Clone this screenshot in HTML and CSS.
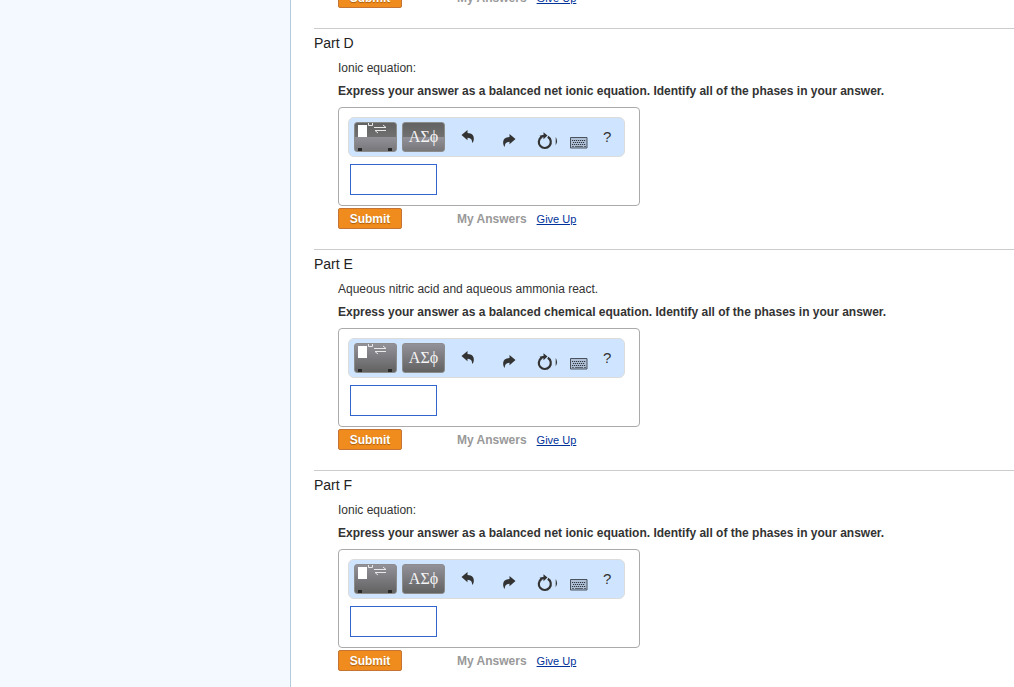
FILE: index.html
```
<!DOCTYPE html>
<html lang="en">
<head>
<meta charset="utf-8">
<title>Assignment</title>
<link rel="stylesheet" href="styles.css">
</head>
<body>
<svg class="sprites" aria-hidden="true">
  <symbol id="undo" viewBox="0 0 14 14"><path d="M.5 5 6.500 0V3C11 3.200 13.200 5.500 12.800 9.500 12.600 11 12.200 12 11.200 13 11.200 10 10.200 8 6.500 7.800V10.200Z"/></symbol>
  <symbol id="redo" viewBox="0 0 14 14"><path d="M13.500 5 7.500 0V3C3 3.200.8 5.500 1.200 9.500 1.400 11 1.800 12 2.800 13 2.800 10 3.800 8 7.500 7.800V10.200Z"/></symbol>
  <symbol id="reset" viewBox="0 0 22 18"><path d="M5.500 5A6 6 0 1 0 11.800 4.800" fill="none" stroke="currentColor" stroke-width="2.200"/><path d="M7.500 .3 11.500 3.600 7.500 7.200ZM3.500 3.800 8.500 2.600V4.800L5.500 6Z"/><path d="M19.700 5Q22.300 9.200 19.700 13.300Z"/></symbol>
  <symbol id="keyboard" viewBox="0 0 18 12"><path d="M.5.5h16.500v10.500H.5Z" fill="#aebfd6" stroke="#4a525e"/><path d="M2 3.500h14M3 5.500h12M2 7.500h14" fill="none" stroke="#303640" stroke-dasharray="1.200 .8"/><path d="M2 9.500h2M5 9.500h8M14 9.500h2" stroke="#5c6673"/></symbol>
  <symbol id="template" viewBox="0 0 41 28"><path d="M3 2h9v12H3Z" fill="#fff"/><path d="M13.500 0v2.500h4V0M19 4.500h12L28 2M20 7.500h11M20 7.500l3 2.500" fill="none" stroke="#e8e8e8"/><path d="M3 25h4v3H3ZM33 25h4v3h-4Z" fill="#292929"/></symbol>
</svg>
<div class="page">
  <aside class="sidebar"></aside>
  <main class="content">
    <div class="previous">
      <div class="actions">
        <button class="submit" type="button">Submit</button>
        <span class="my-answers">My Answers</span>
        <a class="give-up" href="#">Give Up</a>
      </div>
    </div>

    <section class="part">
      <h2 class="part-title">Part D</h2>
      <div class="part-body">
        <p class="prompt">Ionic equation:</p>
        <label class="instruction" for="answer-d">Express your answer as a balanced net ionic equation. Identify all of the phases in your answer.</label>
        <div class="editor">
          <div class="toolbar split">
            <button class="key" type="button" aria-label="Templates"><svg class="template"><use href="#template"/></svg></button>
            <button class="key" type="button">ΑΣϕ</button>
            <button class="tool undo" type="button" aria-label="Undo"><svg><use href="#undo"/></svg></button>
            <button class="tool redo" type="button" aria-label="Redo"><svg><use href="#redo"/></svg></button>
            <button class="tool reset" type="button" aria-label="Reset"><svg><use href="#reset"/></svg></button>
            <button class="tool keyboard" type="button" aria-label="Keyboard shortcuts"><svg><use href="#keyboard"/></svg></button>
            <button class="tool help" type="button">?</button>
          </div>
          <input class="answer" id="answer-d" type="text">
        </div>
        <div class="actions">
          <button class="submit" type="button">Submit</button>
          <span class="my-answers">My Answers</span>
          <a class="give-up" href="#">Give Up</a>
        </div>
      </div>
    </section>

    <section class="part">
      <h2 class="part-title">Part E</h2>
      <div class="part-body">
        <p class="prompt">Aqueous nitric acid and aqueous ammonia react.</p>
        <label class="instruction" for="answer-e">Express your answer as a balanced chemical equation. Identify all of the phases in your answer.</label>
        <div class="editor">
          <div class="toolbar">
            <button class="key" type="button" aria-label="Templates"><svg class="template"><use href="#template"/></svg></button>
            <button class="key" type="button">ΑΣϕ</button>
            <button class="tool undo" type="button" aria-label="Undo"><svg><use href="#undo"/></svg></button>
            <button class="tool redo" type="button" aria-label="Redo"><svg><use href="#redo"/></svg></button>
            <button class="tool reset" type="button" aria-label="Reset"><svg><use href="#reset"/></svg></button>
            <button class="tool keyboard" type="button" aria-label="Keyboard shortcuts"><svg><use href="#keyboard"/></svg></button>
            <button class="tool help" type="button">?</button>
          </div>
          <input class="answer" id="answer-e" type="text">
        </div>
        <div class="actions">
          <button class="submit" type="button">Submit</button>
          <span class="my-answers">My Answers</span>
          <a class="give-up" href="#">Give Up</a>
        </div>
      </div>
    </section>

    <section class="part">
      <h2 class="part-title">Part F</h2>
      <div class="part-body">
        <p class="prompt">Ionic equation:</p>
        <label class="instruction" for="answer-f">Express your answer as a balanced net ionic equation. Identify all of the phases in your answer.</label>
        <div class="editor">
          <div class="toolbar">
            <button class="key" type="button" aria-label="Templates"><svg class="template"><use href="#template"/></svg></button>
            <button class="key" type="button">ΑΣϕ</button>
            <button class="tool undo" type="button" aria-label="Undo"><svg><use href="#undo"/></svg></button>
            <button class="tool redo" type="button" aria-label="Redo"><svg><use href="#redo"/></svg></button>
            <button class="tool reset" type="button" aria-label="Reset"><svg><use href="#reset"/></svg></button>
            <button class="tool keyboard" type="button" aria-label="Keyboard shortcuts"><svg><use href="#keyboard"/></svg></button>
            <button class="tool help" type="button">?</button>
          </div>
          <input class="answer" id="answer-f" type="text">
        </div>
        <div class="actions">
          <button class="submit" type="button">Submit</button>
          <span class="my-answers">My Answers</span>
          <a class="give-up" href="#">Give Up</a>
        </div>
      </div>
    </section>
  </main>
</div>
</body>
</html>
```
FILE: styles.css
```
* { box-sizing: border-box; }

body {
  margin: 0;
  background: #fff;
  color: #333;
  font: 12px/16px Arial, "Liberation Sans", sans-serif;
}

button { margin: 0; padding: 0; border: 0; cursor: pointer; }

.sprites { display: none; }

.page {
  display: grid;
  grid-template-columns: 291px minmax(0, 1fr);
  min-height: 100vh;
}

.sidebar {
  background: #f4f8ff;
  border-right: 1px solid #b5cbdc;
}

.content { padding-left: 23px; }

/* Tail of the part above, scrolled mostly out of view */
.previous {
  display: flex;
  align-items: flex-end;
  height: 8px;
  margin-bottom: 20px;
  padding-left: 24px;
  overflow: hidden;
}

.part {
  border-top: 1px solid #ccc;
  padding: 6px 0 20px;
}

.part-title {
  margin: 0 0 9px;
  color: #222;
  font-size: 14px;
  font-weight: 400;
  line-height: 16px;
}

.part:last-child { padding-bottom: 16px; }

.part-body { padding-left: 24px; }

.prompt { margin: 0 0 7px; }

.instruction {
  display: block;
  margin-bottom: 8px;
  font-weight: 700;
}

.editor {
  width: 302px;
  padding: 9px;
  border: 1px solid #aaa;
  border-radius: 4px;
}

.toolbar {
  display: flex;
  align-items: flex-start;
  width: 277px;
  height: 40px;
  padding: 4px 5px;
  border: 1px solid #dcdcdc;
  border-radius: 6px;
  background: #cfe5ff;
}

.key {
  width: 43px;
  height: 30px;
  margin-right: 5px;
  border: 1px solid #8c8c8c;
  border-radius: 3px;
  background: linear-gradient(#929199, #626262);
  color: #f4f4f4;
  font: 16px/26px "Liberation Serif", serif;
}

.split .key {
  background: linear-gradient(#626262, #707070 50%, #929199 50%, #77777a);
}

.template {
  display: block;
  width: 41px;
  height: 28px;
}

.tool {
  display: flex;
  background: none;
  color: #333;
  fill: currentColor;
}

.tool svg { width: 14px; height: 14px; }
.undo { margin: 8px 0 0 11px; }
.redo { margin: 12px 0 0 27px; }
.reset { margin: 10px 0 0 20px; }
.reset svg { width: 22px; height: 18px; }
.keyboard { margin: 15px 0 0 12px; }
.keyboard svg { width: 18px; height: 12px; }

.help {
  margin: 6px 0 0 15px;
  font: 15px/18px "Liberation Sans", sans-serif;
}

.answer {
  display: block;
  width: 87px;
  height: 31px;
  margin: 7px 0 1px 2px;
  padding: 2px 6px;
  border: 1px solid #3366cc;
  background: #fff;
  font: 16px "Liberation Sans", sans-serif;
}

.actions {
  display: flex;
  align-items: center;
  margin-top: 2px;
}

.submit {
  width: 64px;
  height: 21px;
  margin-right: 55px;
  border: 1px solid #c57434;
  border-radius: 2px;
  background: #f08c1e;
  color: #fff;
  font: bold 12px/18px Arial, "Liberation Sans", sans-serif;
  text-shadow: 0 1px 1px #a65c0c;
}

.my-answers {
  margin-right: 10px;
  color: #999;
  font-weight: 700;
}

.give-up {
  color: #039;
  font-size: 11px;
  text-decoration: underline;
}
```
